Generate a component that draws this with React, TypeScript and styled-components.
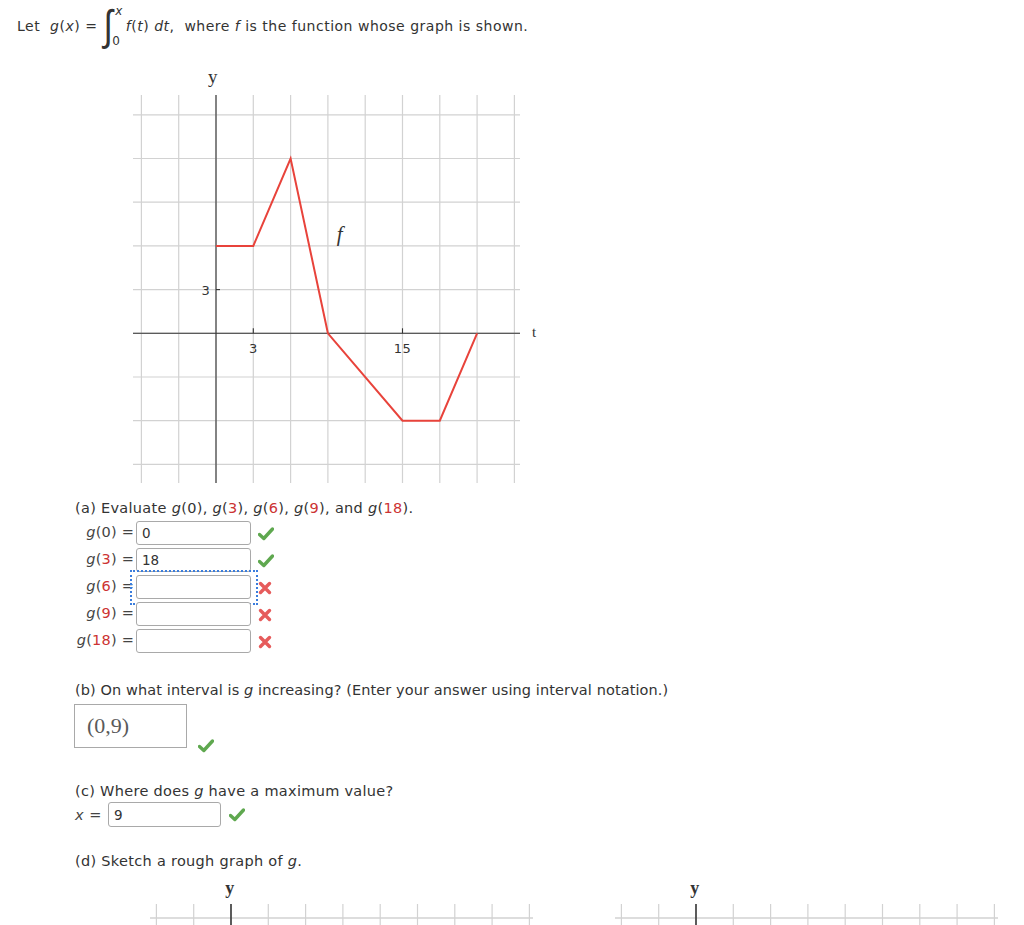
import React from 'react'
import styled, { createGlobalStyle } from 'styled-components'

const GlobalStyle = createGlobalStyle`
  html, body {
    margin: 0;
    padding: 0;
    background: #ffffff;
  }
  body {
    font-family: 'DejaVu Sans', Verdana, sans-serif;
    font-size: 14px;
    letter-spacing: 0.5px;
    color: #333333;
  }
`

const Page = styled.div`
  padding: 0 0 0 17px;
  width: 1007px;
  overflow: hidden;
`

const Header = styled.div`
  height: 52px;
  display: flex;
  align-items: center;
  white-space: pre;
`

const MathI = styled.i`
  font-style: italic;
`

const Red = styled.span`
  color: #cc3333;
`

const IntegralWrap = styled.span`
  display: inline-flex;
  align-items: stretch;
  height: 44px;
  margin: 0 3px 0 6px;
`

const IntegralSign = styled.span`
  font-family: 'DejaVu Sans', sans-serif;
  font-size: 34px;
  line-height: 44px;
  font-weight: 300;
  transform: scaleY(1.25) translateY(-1px);
  color: #333333;
`

const Limits = styled.span`
  display: flex;
  flex-direction: column;
  justify-content: space-between;
  font-size: 12px;
  line-height: 13px;
  padding: 1px 0 0 0;
  margin-left: 1px;
`

const Limit = styled.span<{ $shift?: number }>`
  margin-left: ${(p) => p.$shift ?? 0}px;
`

const Graph = styled.svg`
  display: block;
  margin: 10px 0 0 103px;
`

const Section = styled.div`
  margin-left: 58px;
`

const Prompt = styled.div<{ $top: number; $ls?: number }>`
  margin-top: ${(p) => p.$top}px;
  line-height: 18px;
  font-size: 14.5px;
  letter-spacing: ${(p) => p.$ls ?? 0.3}px;
  white-space: nowrap;
`

const Rows = styled.div`
  display: grid;
  grid-template-columns: 61px 116px 24px;
  grid-auto-rows: 27px;
  margin-top: 4px;
`

const RowLabel = styled.span`
  display: flex;
  align-items: flex-start;
  justify-content: flex-end;
  padding: 3px 2px 0 0;
  font-size: 14.5px;
  letter-spacing: 0.2px;
  color: #444444;
  white-space: nowrap;
`

const BoxCell = styled.span`
  position: relative;
  display: block;
`

const AnswerBox = styled.span<{ $w: number; $h: number }>`
  display: flex;
  align-items: center;
  box-sizing: border-box;
  width: ${(p) => p.$w}px;
  height: ${(p) => p.$h}px;
  border: 1px solid #a9a9a9;
  border-radius: 3px;
  padding-left: 5px;
  font-size: 13.5px;
  letter-spacing: 0;
  color: #333333;
  background: #ffffff;
`

const FocusRing = styled.span`
  position: absolute;
  left: -6px;
  top: -5px;
  right: -6px;
  bottom: -3px;
  border: 2px dotted #3b7ddd;
  pointer-events: none;
`

const Mark = styled.span`
  display: flex;
  align-items: flex-start;
  padding: 6px 0 0 6px;
`

const IntervalRow = styled.div`
  display: flex;
  align-items: flex-end;
  margin-top: 5px;
  margin-left: -1px;
`

const IntervalBox = styled.div`
  box-sizing: border-box;
  width: 113px;
  height: 44px;
  border: 1px solid #a9a9a9;
  display: flex;
  align-items: center;
  padding-left: 12px;
  font-family: 'Liberation Serif', serif;
  font-size: 22px;
  letter-spacing: 0;
  color: #5a5a5a;
`

const IntervalMark = styled.span`
  margin: 0 0 -8px 11px;
`

const XRow = styled.div`
  display: flex;
  align-items: center;
  margin-top: 2px;
`

const XLabel = styled.span`
  width: 33px;
  font-size: 14.5px;
  color: #444444;
`

const XMark = styled.span`
  margin: 4px 0 0 8px;
`

const SketchRow = styled.div`
  display: flex;
  gap: 65px;
  margin: 3px 0 0 65px;
`

const Check: React.FC = () => (
  <svg width='16' height='14' viewBox='0 0 16 14'>
    <path d='M1.5 7.5 L5.8 11.5 L14.5 2' fill='none' stroke='#5fa84f' strokeWidth='3.4' strokeLinecap='round' strokeLinejoin='round' />
  </svg>
)

const Cross: React.FC = () => (
  <svg width='14' height='14' viewBox='0 0 14 14'>
    <path d='M2.5 2.5 L11.5 11.5 M11.5 2.5 L2.5 11.5' fill='none' stroke='#e65b5b' strokeWidth='3.4' strokeLinecap='round' />
  </svg>
)

const X = (t: number) => 96 + t * 12.433
const Y = (v: number) => 271.3 - v * 14.567

const fPoints: [number, number][] = [
  [0, 6],
  [3, 6],
  [6, 12],
  [9, 0],
  [15, -6],
  [18, -6],
  [21, 0]
]

const range = (from: number, to: number, step: number) => {
  const out: number[] = []
  for (let v = from; v <= to; v += step) out.push(v)
  return out
}

const MainGraph: React.FC = () => (
  <Graph width='425' height='428' viewBox='0 0 425 428'>
    {range(-6, 24, 3).map((t) => (
      <line key={'v' + t} x1={X(t)} x2={X(t)} y1='33' y2='421' stroke='#d2d2d2' strokeWidth='1.2' />
    ))}
    {range(-9, 15, 3).map((v) => (
      <line key={'h' + v} x1='13' x2='400' y1={Y(v)} y2={Y(v)} stroke='#d2d2d2' strokeWidth='1.2' />
    ))}
    <line x1='13' x2='400' y1={Y(0)} y2={Y(0)} stroke='#333' strokeWidth='1.1' />
    <line x1={X(0)} x2={X(0)} y1='33' y2='421' stroke='#333' strokeWidth='1.1' />
    <line x1={X(3)} x2={X(3)} y1={Y(0) - 5} y2={Y(0)} stroke='#333' strokeWidth='1.1' />
    <line x1={X(15)} x2={X(15)} y1={Y(0) - 5} y2={Y(0)} stroke='#333' strokeWidth='1.1' />
    <line x1={X(0)} x2={X(0) + 4} y1={Y(3)} y2={Y(3)} stroke='#333' strokeWidth='1.1' />
    <polyline
      points={fPoints.map(([t, v]) => `${X(t)},${Y(v)}`).join(' ')}
      fill='none'
      stroke='#e8433b'
      strokeWidth='2'
      strokeLinejoin='miter'
    />
    <g fontFamily="'DejaVu Sans', sans-serif" fontSize='13' fill='#333' textAnchor='middle'>
      <text x={X(0) - 10} y={Y(3) + 5}>3</text>
      <text x={X(3)} y={Y(0) + 20}>3</text>
      <text x={X(15)} y={Y(0) + 20}>15</text>
    </g>
    <text x={X(0) - 3} y='21' fontFamily="'Liberation Serif', serif" fontSize='19' fill='#333' textAnchor='middle'>
      y
    </text>
    <text x='412' y={Y(0) + 4} fontFamily="'Liberation Serif', serif" fontSize='15' fill='#333'>
      t
    </text>
    <text x='220' y='179' fontFamily="'Liberation Serif', serif" fontStyle='italic' fontSize='21' fill='#333' textAnchor='middle'>
      f
    </text>
  </Graph>
)

const SketchAxis: React.FC = () => (
  <svg width='400' height='70' viewBox='0 0 400 70' style={{ display: 'block' }}>
    {range(-6, 24, 3).map((t) => (
      <line key={t} x1={X(t) - 5} x2={X(t) - 5} y1='31' y2='70' stroke='#d2d2d2' strokeWidth='1.2' />
    ))}
    <line x1='10' x2='393' y1='45' y2='45' stroke='#d2d2d2' strokeWidth='1.5' />
    <line x1={X(0) - 5} x2={X(0) - 5} y1='31' y2='70' stroke='#222' strokeWidth='1.4' />
    <text x={X(0) - 6} y='21' fontFamily="'Liberation Serif', serif" fontWeight='bold' fontSize='18' fill='#333' textAnchor='middle'>
      y
    </text>
  </svg>
)

type Row = { arg: string; red: boolean; value: string; ok: boolean; focus?: boolean }

const rows: Row[] = [
  { arg: '0', red: false, value: '0', ok: true },
  { arg: '3', red: true, value: '18', ok: true },
  { arg: '6', red: true, value: '', ok: false, focus: true },
  { arg: '9', red: true, value: '', ok: false },
  { arg: '18', red: true, value: '', ok: false }
]

const Arg: React.FC<{ n: string; red: boolean }> = ({ n, red }) => (
  <>
    <MathI>g</MathI>({red ? <Red>{n}</Red> : n})
  </>
)

const App: React.FC = () => {
  return (
    <Page>
      <GlobalStyle />
      <Header>
        <span>Let  </span>
        <MathI>g</MathI>
        <span>(</span>
        <MathI>x</MathI>
        <span>) =</span>
        <IntegralWrap>
          <IntegralSign>∫</IntegralSign>
          <Limits>
            <Limit $shift={1}>
              <MathI>x</MathI>
            </Limit>
            <Limit $shift={-2}>0</Limit>
          </Limits>
        </IntegralWrap>
        <MathI>f</MathI>
        <span>(</span>
        <MathI>t</MathI>
        <span>) </span>
        <MathI>dt</MathI>
        <span>,  where </span>
        <MathI>f</MathI>
        <span> is the function whose graph is shown.</span>
      </Header>

      <MainGraph />

      <Section>
        <Prompt $top={9}>
          (a) Evaluate <Arg n='0' red={false} />, <Arg n='3' red />, <Arg n='6' red />, <Arg n='9' red />, and <Arg n='18' red />.
        </Prompt>
        <Rows>
          {rows.map((r) => (
            <React.Fragment key={r.arg}>
              <RowLabel>
                <Arg n={r.arg} red={r.red} />
                &nbsp;=
              </RowLabel>
              <BoxCell>
                <AnswerBox $w={115} $h={24}>{r.value}</AnswerBox>
                {r.focus && <FocusRing />}
              </BoxCell>
              <Mark>{r.ok ? <Check /> : <Cross />}</Mark>
            </React.Fragment>
          ))}
        </Rows>

        <Prompt $top={25} $ls={0.1}>
          (b) On what interval is <MathI>g</MathI> increasing? (Enter your answer using interval notation.)
        </Prompt>
        <IntervalRow>
          <IntervalBox>(0,9)</IntervalBox>
          <IntervalMark>
            <Check />
          </IntervalMark>
        </IntervalRow>

        <Prompt $top={34}>
          (c) Where does <MathI>g</MathI> have a maximum value?
        </Prompt>
        <XRow>
          <XLabel>
            <MathI>x</MathI> =
          </XLabel>
          <AnswerBox $w={113} $h={25}>9</AnswerBox>
          <XMark>
            <Check />
          </XMark>
        </XRow>

        <Prompt $top={25}>
          (d) Sketch a rough graph of <MathI>g</MathI>.
        </Prompt>
        <SketchRow>
          <SketchAxis />
          <SketchAxis />
        </SketchRow>
      </Section>
    </Page>
  )
}

export default App
